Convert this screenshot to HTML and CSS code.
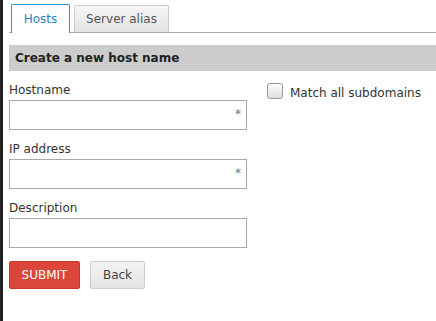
FILE: index.html
```html
<!DOCTYPE html>
<html>
<head>
<meta charset="utf-8">
<link rel="stylesheet" href="styles.css">
</head>
<body>
<div class="strip"></div>
<div class="main">
  <div class="tabs">
    <div class="tab active">Hosts</div>
    <div class="tab">Server alias</div>
  </div>
  <div class="header">Create a new host name</div>
  <div class="form">
    <div class="fields">
      <div class="field">
        <label class="label">Hostname</label>
        <div class="inputwrap"><div class="input"></div><span class="req">*</span></div>
      </div>
      <div class="field">
        <label class="label">IP address</label>
        <div class="inputwrap"><div class="input"></div><span class="req">*</span></div>
      </div>
      <div class="field">
        <label class="label">Description</label>
        <div class="inputwrap"><div class="input"></div></div>
      </div>
      <div class="buttons">
        <div class="btn submit">SUBMIT</div>
        <div class="btn back">Back</div>
      </div>
    </div>
    <div class="side">
      <span class="checkbox"></span>
      <span class="cblabel">Match all subdomains</span>
    </div>
  </div>
</div>
</body>
</html>
```

FILE: styles.css
```css
html, body {
  margin: 0;
  padding: 0;
  height: 100%;
  background: #fff;
}
body {
  display: flex;
  font-family: "DejaVu Sans", sans-serif;
  font-size: 12px;
  color: #333;
}
.strip {
  width: 3px;
  background: #222;
  flex: none;
}
.main {
  flex: 1;
  padding-left: 6px;
}
.tabs {
  display: flex;
  margin-top: 4px;
  height: 28px;
  border-bottom: 1px solid #aaa;
  padding-left: 2px;
  gap: 4px;
  align-items: flex-end;
}
.tab {
  box-sizing: border-box;
  height: 27px;
  width: 95px;
  text-align: center;
  line-height: 26px;
  font-size: 12px;
  color: #555;
  border: 1px solid #ccc;
  border-bottom: none;
  background: linear-gradient(#f7f7f7, #e2e2e2);
  border-radius: 2px 2px 0 0;
}
.tab.active {
  height: 29px;
  margin-bottom: -1px;
  width: 59px;
  line-height: 28px;
  color: #2a86b8;
  border-color: #1f9ad6;
  background: #fff;
}
.header {
  margin-top: 12px;
  height: 26px;
  line-height: 26px;
  background: #cccccc;
  font-weight: bold;
  color: #222;
  padding-left: 6px;
}
.form {
  display: flex;
  margin-top: 10px;
}
.fields {
  width: 238px;
}
.field {
  margin-bottom: 10px;
}
.label {
  display: block;
  height: 18px;
  line-height: 18px;
  margin-bottom: 1px;
}
.inputwrap {
  position: relative;
}
.input {
  box-sizing: border-box;
  height: 30px;
  border: 1px solid #aaa;
  background: #fff;
}
.req {
  position: absolute;
  right: 6px;
  top: 8px;
  font-size: 12px;
  line-height: 12px;
  color: #777;
}
.buttons {
  display: flex;
  gap: 10px;
  margin-top: 13px;
}
.btn {
  box-sizing: border-box;
  height: 28px;
  line-height: 26px;
  text-align: center;
  border-radius: 2px;
}
.submit {
  width: 71px;
  background: #dc4539;
  border: 1px solid #c8372c;
  color: #fff;
}
.back {
  width: 55px;
  background: linear-gradient(#f2f2f2, #e4e4e4);
  border: 1px solid #ccc;
  color: #444;
}
.side {
  margin-left: 20px;
  margin-top: 2px;
  display: flex;
  align-items: center;
  gap: 7px;
  height: 16px;
}
.checkbox {
  box-sizing: border-box;
  width: 16px;
  height: 16px;
  border: 1px solid #999;
  border-radius: 3px;
  background: linear-gradient(#fdfdfd, #dedede);
}
.cblabel {
  color: #333;
  position: relative;
  top: 2px;
}
```
